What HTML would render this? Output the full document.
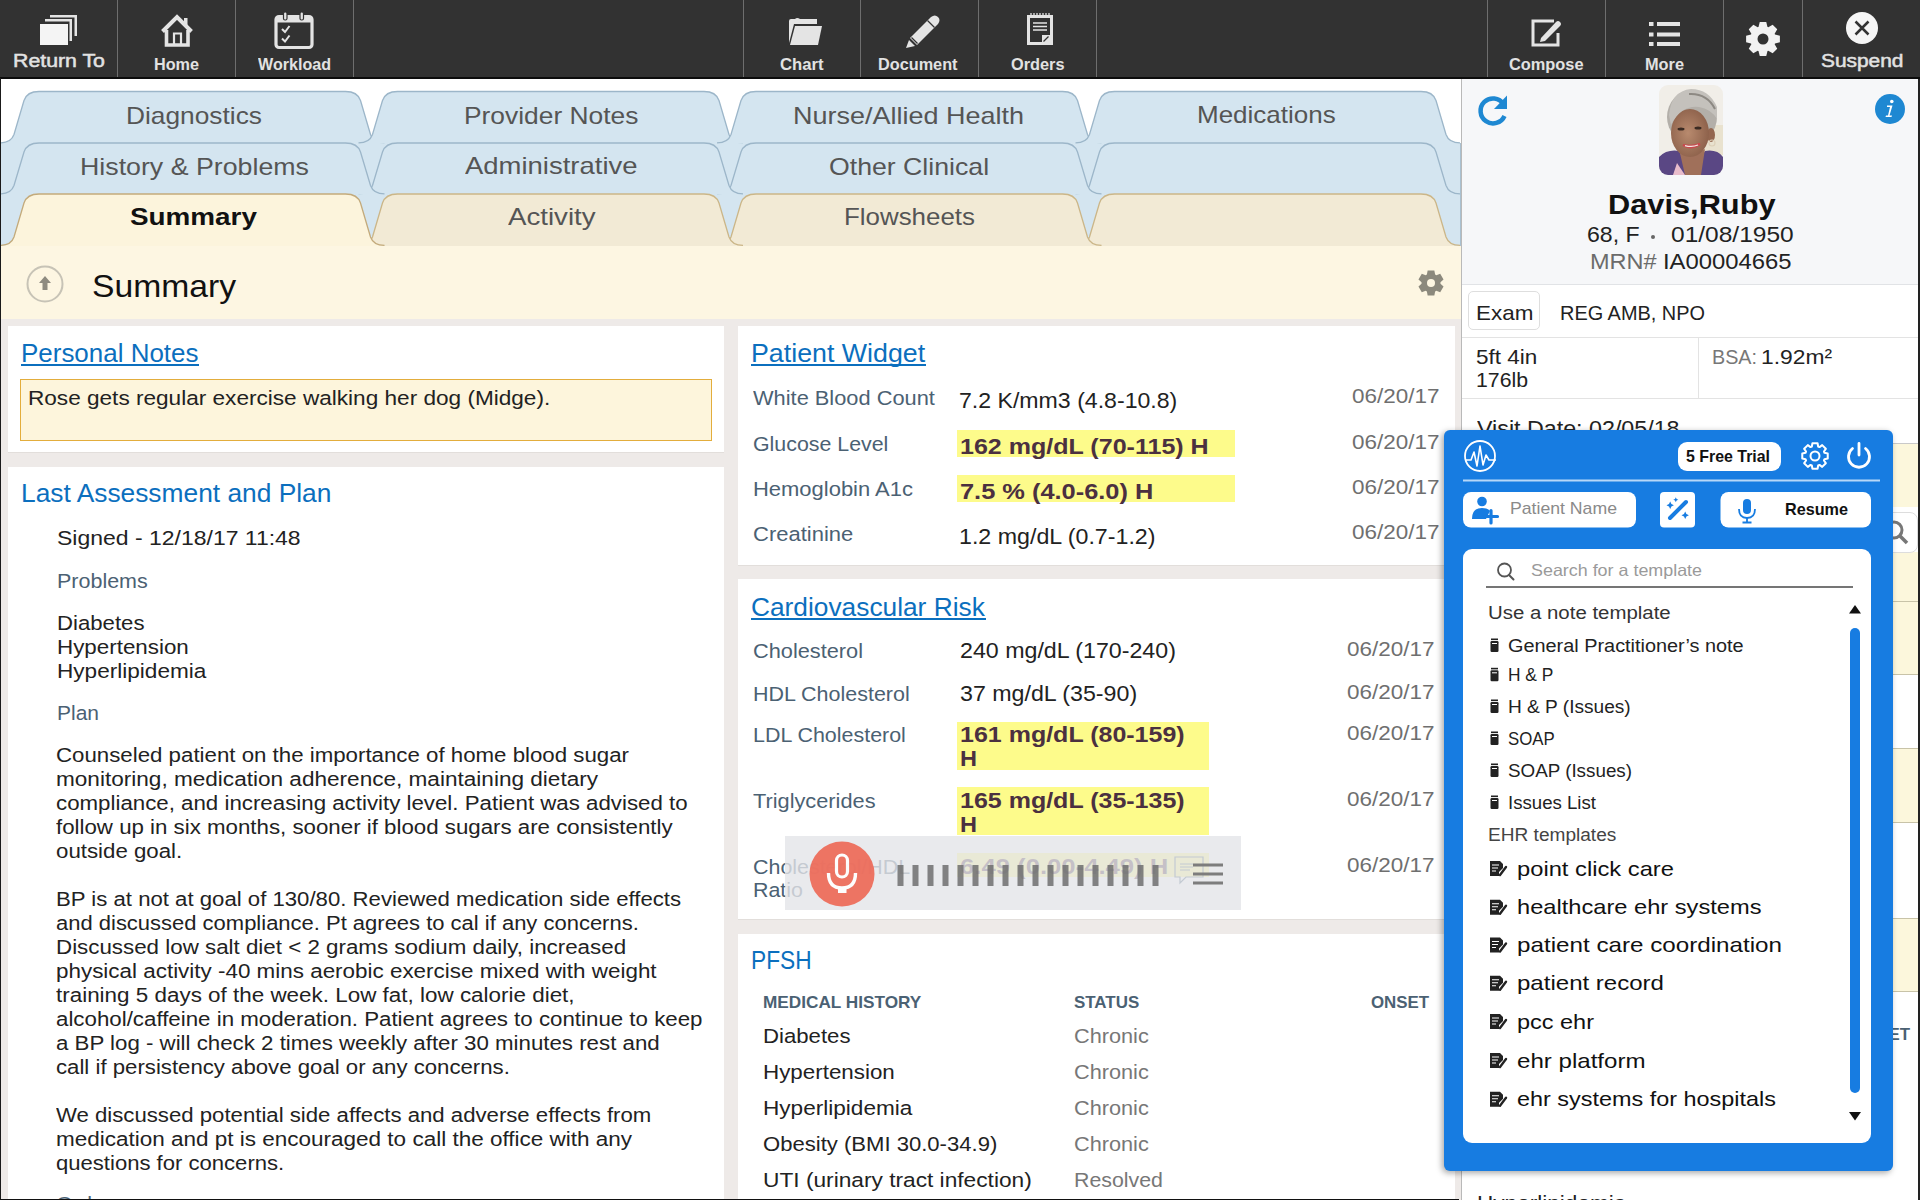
<!DOCTYPE html>
<html><head><meta charset="utf-8"><title>Summary</title><style>
html,body{margin:0;padding:0;width:1920px;height:1200px;overflow:hidden;background:#fff;}
body{position:relative;font-family:"Liberation Sans",sans-serif;}
.t{position:absolute;line-height:0;white-space:pre;transform-origin:0 0;}
</style></head><body>
<div style="position:absolute;left:0;top:0;width:1920px;height:77px;background:#323232"></div>
<div style="position:absolute;left:0;top:77px;width:1920px;height:2px;background:#0c0c0c"></div>
<div style="position:absolute;left:117px;top:0;width:1px;height:77px;background:#6e6e6e"></div>
<div style="position:absolute;left:235px;top:0;width:1px;height:77px;background:#6e6e6e"></div>
<div style="position:absolute;left:353px;top:0;width:1px;height:77px;background:#6e6e6e"></div>
<div style="position:absolute;left:743px;top:0;width:1px;height:77px;background:#6e6e6e"></div>
<div style="position:absolute;left:860px;top:0;width:1px;height:77px;background:#6e6e6e"></div>
<div style="position:absolute;left:978px;top:0;width:1px;height:77px;background:#6e6e6e"></div>
<div style="position:absolute;left:1096px;top:0;width:1px;height:77px;background:#6e6e6e"></div>
<div style="position:absolute;left:1487px;top:0;width:1px;height:77px;background:#6e6e6e"></div>
<div style="position:absolute;left:1605px;top:0;width:1px;height:77px;background:#6e6e6e"></div>
<div style="position:absolute;left:1723px;top:0;width:1px;height:77px;background:#6e6e6e"></div>
<div style="position:absolute;left:1802px;top:0;width:1px;height:77px;background:#6e6e6e"></div>
<div class="t" style="left:13.00px;top:60.70px;font-size:18px;color:#e2e2e2;transform:scaleX(1.1831);-webkit-text-stroke:0.5px #e2e2e2;">Return To</div>
<div class="t" style="left:154.00px;top:64.90px;font-size:16px;color:#e2e2e2;font-weight:bold;transform:scaleX(1.0117);">Home</div>
<div class="t" style="left:258.00px;top:64.90px;font-size:16px;color:#e2e2e2;font-weight:bold;transform:scaleX(1.0050);">Workload</div>
<div class="t" style="left:780.00px;top:64.90px;font-size:16px;color:#e2e2e2;font-weight:bold;transform:scaleX(1.0417);">Chart</div>
<div class="t" style="left:878.00px;top:64.90px;font-size:16px;color:#e2e2e2;font-weight:bold;transform:scaleX(1.0161);">Document</div>
<div class="t" style="left:1011.00px;top:64.90px;font-size:16px;color:#e2e2e2;font-weight:bold;transform:scaleX(1.0194);">Orders</div>
<div class="t" style="left:1509.00px;top:64.90px;font-size:16px;color:#e2e2e2;font-weight:bold;transform:scaleX(1.0222);">Compose</div>
<div class="t" style="left:1645.00px;top:64.90px;font-size:16px;color:#e2e2e2;font-weight:bold;transform:scaleX(1.0199);">More</div>
<div class="t" style="left:1820.50px;top:60.70px;font-size:18px;color:#e2e2e2;transform:scaleX(1.1603);-webkit-text-stroke:0.5px #e2e2e2;">Suspend</div>
<svg style="position:absolute;left:0;top:0" width="1920" height="78" viewBox="0 0 1920 78"><rect x="50" y="15" width="27" height="21" fill="#e4e4e4"/><rect x="47.5" y="17.5" width="27" height="21" fill="#323232"/><rect x="45" y="19" width="27" height="22" fill="#e4e4e4"/><rect x="42.5" y="21.5" width="27" height="22" fill="#323232"/><rect x="40" y="24" width="28" height="21" fill="#f4f4f4"/><path d="M162.5 31.5 L177 17 L191.5 31.5" fill="none" stroke="#e4e4e4" stroke-width="4" stroke-linejoin="miter"/><path d="M166.5 30 V45 H188 V30" fill="none" stroke="#e4e4e4" stroke-width="3.6"/><path d="M174 45 V33.5 H181 V45" fill="none" stroke="#e4e4e4" stroke-width="2.2"/><rect x="184" y="18" width="3.5" height="8" fill="#e4e4e4"/><rect x="276" y="16.5" width="36" height="31" rx="3" fill="none" stroke="#e4e4e4" stroke-width="3.2"/><rect x="276" y="16.5" width="36" height="6" fill="#e4e4e4"/><rect x="283.5" y="12" width="3.5" height="8" rx="1.5" fill="#e4e4e4" stroke="#323232" stroke-width="1.2"/><rect x="300" y="12" width="3.5" height="8" rx="1.5" fill="#e4e4e4" stroke="#323232" stroke-width="1.2"/><path d="M282 29 L285 32 L289.5 26 M282 38.5 L285 41.5 L289.5 35.5" fill="none" stroke="#e4e4e4" stroke-width="2"/><path d="M789 45 V21 Q789 19 791 19 H795 Q797 17 800 19 H817 V24 H794 L789 43 Z" fill="#e4e4e4"/><path d="M790 45 L795 26 H822 L818 45 Z" fill="#e4e4e4"/><path d="M910 38 L931 17 Q935 14 938 17 Q941 20 938 24 L917 45 Z" fill="#e4e4e4"/><path d="M909 40 L915 46 L906 48 Z" fill="#e4e4e4"/><path d="M927.5 20.5 L934.5 27.5" stroke="#323232" stroke-width="1.3"/><path d="M911.5 37.5 L917.5 43.5" stroke="#323232" stroke-width="1.2"/><rect x="1028.5" y="16.5" width="23" height="27" fill="none" stroke="#e4e4e4" stroke-width="3"/><path d="M1031 13 V18 M1034 13 V18 M1037 13 V18 M1040 13 V18 M1043 13 V18 M1046 13 V18 M1049 13 V18" stroke="#e4e4e4" stroke-width="1.3"/><path d="M1033 23 H1047 M1033 26.5 H1047 M1033 30 H1047" stroke="#e4e4e4" stroke-width="1.5"/><rect x="1042" y="35" width="8" height="8" fill="#e4e4e4"/><path d="M1043.5 41.5 L1048.5 36.5" stroke="#323232" stroke-width="1.3"/><path d="M1554 21 H1533 V45 H1558 V33" fill="none" stroke="#e4e4e4" stroke-width="3"/><path d="M1541 38 L1556 22 Q1558 20 1560 22 Q1562 24 1560 26 L1545 41 L1540 42 Z" fill="#e4e4e4"/><rect x="1649" y="22" width="4.5" height="4" fill="#e4e4e4"/><rect x="1657" y="22" width="23" height="4" fill="#e4e4e4"/><rect x="1649" y="32.5" width="4.5" height="4" fill="#e4e4e4"/><rect x="1657" y="32.5" width="23" height="4" fill="#e4e4e4"/><rect x="1649" y="42" width="4.5" height="4" fill="#e4e4e4"/><rect x="1657" y="42" width="23" height="4" fill="#e4e4e4"/><path d="M1779.89 35.75 L1779.89 42.25 L1774.98 43.51 L1774.66 44.28 L1777.24 48.65 L1772.65 53.24 L1768.28 50.66 L1767.51 50.98 L1766.25 55.89 L1759.75 55.89 L1758.49 50.98 L1757.72 50.66 L1753.35 53.24 L1748.76 48.65 L1751.34 44.28 L1751.02 43.51 L1746.11 42.25 L1746.11 35.75 L1751.02 34.49 L1751.34 33.72 L1748.76 29.35 L1753.35 24.76 L1757.72 27.34 L1758.49 27.02 L1759.75 22.11 L1766.25 22.11 L1767.51 27.02 L1768.28 27.34 L1772.65 24.76 L1777.24 29.35 L1774.66 33.72 L1774.98 34.49 Z" fill="#f2f2f2"/><circle cx="1763" cy="39" r="5.5" fill="#323232"/><circle cx="1862" cy="28" r="16" fill="#f6f6f6"/><path d="M1855.5 21.5 L1868.5 34.5 M1868.5 21.5 L1855.5 34.5" stroke="#333" stroke-width="2.5"/></svg>
<div style="position:absolute;left:1px;top:79px;width:1460px;height:168px;background:#fff"></div>
<div style="position:absolute;left:1px;top:143px;width:1459px;height:104px;background:#d4e5f0;border-right:1px solid #a9c0d0"></div>
<svg style="position:absolute;left:0;top:0" width="1461" height="260" viewBox="0 0 1461 260"><defs><clipPath id="tc"><rect x="1" y="79" width="1459" height="168"/></clipPath></defs><g clip-path="url(#tc)"><path d="M0.0 143.5 Q11.0 143.5 14.0 134.5 L24.0 100.5 Q27.0 91.5 39.0 91.5 L345.5 91.5 Q357.5 91.5 360.5 100.5 L370.5 134.5 Q373.5 143.5 384.5 143.5 Z" fill="#d4e5f0"/><path d="M0.0 142.9 Q11.0 142.9 14.0 134.5 L24.0 100.5 Q27.0 91.5 39.0 91.5 L345.5 91.5 Q357.5 91.5 360.5 100.5 L370.5 134.5 Q373.5 142.9 384.5 142.9" fill="none" stroke="#9cb6c9" stroke-width="1.3"/><path d="M358.5 143.5 Q369.5 143.5 372.5 134.5 L382.5 100.5 Q385.5 91.5 397.5 91.5 L704.0 91.5 Q716.0 91.5 719.0 100.5 L729.0 134.5 Q732.0 143.5 743.0 143.5 Z" fill="#d4e5f0"/><path d="M358.5 142.9 Q369.5 142.9 372.5 134.5 L382.5 100.5 Q385.5 91.5 397.5 91.5 L704.0 91.5 Q716.0 91.5 719.0 100.5 L729.0 134.5 Q732.0 142.9 743.0 142.9" fill="none" stroke="#9cb6c9" stroke-width="1.3"/><path d="M717.0 143.5 Q728.0 143.5 731.0 134.5 L741.0 100.5 Q744.0 91.5 756.0 91.5 L1062.5 91.5 Q1074.5 91.5 1077.5 100.5 L1087.5 134.5 Q1090.5 143.5 1101.5 143.5 Z" fill="#d4e5f0"/><path d="M717.0 142.9 Q728.0 142.9 731.0 134.5 L741.0 100.5 Q744.0 91.5 756.0 91.5 L1062.5 91.5 Q1074.5 91.5 1077.5 100.5 L1087.5 134.5 Q1090.5 142.9 1101.5 142.9" fill="none" stroke="#9cb6c9" stroke-width="1.3"/><path d="M1075.5 143.5 Q1086.5 143.5 1089.5 134.5 L1099.5 100.5 Q1102.5 91.5 1114.5 91.5 L1421.0 91.5 Q1433.0 91.5 1436.0 100.5 L1446.0 134.5 Q1449.0 143.5 1460.0 143.5 Z" fill="#d4e5f0"/><path d="M1075.5 142.9 Q1086.5 142.9 1089.5 134.5 L1099.5 100.5 Q1102.5 91.5 1114.5 91.5 L1421.0 91.5 Q1433.0 91.5 1436.0 100.5 L1446.0 134.5 Q1449.0 142.9 1460.0 142.9" fill="none" stroke="#9cb6c9" stroke-width="1.3"/><path d="M1075.5 194.5 Q1086.5 194.5 1089.5 185.5 L1099.5 152 Q1102.5 143 1114.5 143 L1421.0 143 Q1433.0 143 1436.0 152 L1446.0 185.5 Q1449.0 194.5 1460.0 194.5 Z" fill="#d4e5f0"/><path d="M1075.5 193.9 Q1086.5 193.9 1089.5 185.5 L1099.5 152 Q1102.5 143 1114.5 143 L1421.0 143 Q1433.0 143 1436.0 152 L1446.0 185.5 Q1449.0 193.9 1460.0 193.9" fill="none" stroke="#9cb6c9" stroke-width="1.3"/><path d="M717.0 194.5 Q728.0 194.5 731.0 185.5 L741.0 152 Q744.0 143 756.0 143 L1062.5 143 Q1074.5 143 1077.5 152 L1087.5 185.5 Q1090.5 194.5 1101.5 194.5 Z" fill="#d4e5f0"/><path d="M717.0 193.9 Q728.0 193.9 731.0 185.5 L741.0 152 Q744.0 143 756.0 143 L1062.5 143 Q1074.5 143 1077.5 152 L1087.5 185.5 Q1090.5 193.9 1101.5 193.9" fill="none" stroke="#9cb6c9" stroke-width="1.3"/><path d="M358.5 194.5 Q369.5 194.5 372.5 185.5 L382.5 152 Q385.5 143 397.5 143 L704.0 143 Q716.0 143 719.0 152 L729.0 185.5 Q732.0 194.5 743.0 194.5 Z" fill="#d4e5f0"/><path d="M358.5 193.9 Q369.5 193.9 372.5 185.5 L382.5 152 Q385.5 143 397.5 143 L704.0 143 Q716.0 143 719.0 152 L729.0 185.5 Q732.0 193.9 743.0 193.9" fill="none" stroke="#9cb6c9" stroke-width="1.3"/><path d="M0.0 194.5 Q11.0 194.5 14.0 185.5 L24.0 152 Q27.0 143 39.0 143 L345.5 143 Q357.5 143 360.5 152 L370.5 185.5 Q373.5 194.5 384.5 194.5 Z" fill="#d4e5f0"/><path d="M0.0 193.9 Q11.0 193.9 14.0 185.5 L24.0 152 Q27.0 143 39.0 143 L345.5 143 Q357.5 143 360.5 152 L370.5 185.5 Q373.5 193.9 384.5 193.9" fill="none" stroke="#9cb6c9" stroke-width="1.3"/><path d="M1075.5 246 Q1086.5 246 1089.5 237 L1099.5 203 Q1102.5 194 1114.5 194 L1421.0 194 Q1433.0 194 1436.0 203 L1446.0 237 Q1449.0 246 1460.0 246 Z" fill="#f2ead5"/><path d="M1075.5 245.4 Q1086.5 245.4 1089.5 237 L1099.5 203 Q1102.5 194 1114.5 194 L1421.0 194 Q1433.0 194 1436.0 203 L1446.0 237 Q1449.0 245.4 1460.0 245.4" fill="none" stroke="#cbb688" stroke-width="1.3"/><path d="M717.0 246 Q728.0 246 731.0 237 L741.0 203 Q744.0 194 756.0 194 L1062.5 194 Q1074.5 194 1077.5 203 L1087.5 237 Q1090.5 246 1101.5 246 Z" fill="#f2ead5"/><path d="M717.0 245.4 Q728.0 245.4 731.0 237 L741.0 203 Q744.0 194 756.0 194 L1062.5 194 Q1074.5 194 1077.5 203 L1087.5 237 Q1090.5 245.4 1101.5 245.4" fill="none" stroke="#cbb688" stroke-width="1.3"/><path d="M358.5 246 Q369.5 246 372.5 237 L382.5 203 Q385.5 194 397.5 194 L704.0 194 Q716.0 194 719.0 203 L729.0 237 Q732.0 246 743.0 246 Z" fill="#f2ead5"/><path d="M358.5 245.4 Q369.5 245.4 372.5 237 L382.5 203 Q385.5 194 397.5 194 L704.0 194 Q716.0 194 719.0 203 L729.0 237 Q732.0 245.4 743.0 245.4" fill="none" stroke="#cbb688" stroke-width="1.3"/><path d="M0 246 Q11 246 14 237 L24 203 Q27 194 39 194 L345.5 194 Q357.5 194 360.5 203 L370.5 237 Q373.5 246 384.5 246 Z" fill="#fcf4dc"/><path d="M0 245.4 Q11 245.4 14 237 L24 203 Q27 194 39 194 L345.5 194 Q357.5 194 360.5 203 L370.5 237 Q373.5 245.4 384.5 245.4" fill="none" stroke="#c3aa7b" stroke-width="1.3"/></g></svg>
<div class="t" style="left:126.00px;top:115.60px;font-size:24px;color:#555555;transform:scaleX(1.0961);">Diagnostics</div>
<div class="t" style="left:464.40px;top:115.60px;font-size:24px;color:#555555;transform:scaleX(1.0985);">Provider Notes</div>
<div class="t" style="left:793.00px;top:115.60px;font-size:24px;color:#555555;transform:scaleX(1.1244);">Nurse/Allied Health</div>
<div class="t" style="left:1197.30px;top:115.30px;font-size:24px;color:#555555;transform:scaleX(1.0833);">Medications</div>
<div class="t" style="left:79.50px;top:166.60px;font-size:24px;color:#555555;transform:scaleX(1.1147);">History &amp; Problems</div>
<div class="t" style="left:465.00px;top:166.40px;font-size:24px;color:#555555;transform:scaleX(1.1445);">Administrative</div>
<div class="t" style="left:828.50px;top:166.60px;font-size:24px;color:#555555;transform:scaleX(1.1111);">Other Clinical</div>
<div class="t" style="left:130.00px;top:217.10px;font-size:24px;color:#111;font-weight:bold;transform:scaleX(1.1605);">Summary</div>
<div class="t" style="left:507.50px;top:217.20px;font-size:24px;color:#555555;transform:scaleX(1.1519);">Activity</div>
<div class="t" style="left:843.50px;top:217.10px;font-size:24px;color:#555555;transform:scaleX(1.0787);">Flowsheets</div>
<div style="position:absolute;left:1px;top:246px;width:1460px;height:73px;background:#fdf6e2"></div>
<div style="position:absolute;left:1px;top:319px;width:1460px;height:881px;background:#eeeae8"></div>
<svg style="position:absolute;left:0;top:240" width="100" height="90"></svg>
<svg style="position:absolute;left:20px;top:259px" width="50" height="50" viewBox="20 259 50 50"><circle cx="45" cy="284" r="17.5" fill="none" stroke="#c7c3b6" stroke-width="2"/><path d="M45 276 L51 283 H47.5 V290 H42.5 V283 H39 Z" fill="#8e8b80"/></svg>
<div class="t" style="left:91.70px;top:286.55px;font-size:31.29px;color:#111;transform:scaleX(1.0759);">Summary</div>
<svg style="position:absolute;left:1410px;top:262px" width="42" height="42" viewBox="1410 262 42 42"><path d="M1427.66 270.44 L1434.34 270.44 L1435.13 274.45 L1436.34 275.14 L1440.21 273.82 L1443.55 279.61 L1440.47 282.30 L1440.47 283.70 L1443.55 286.39 L1440.21 292.18 L1436.34 290.86 L1435.13 291.55 L1434.34 295.56 L1427.66 295.56 L1426.87 291.55 L1425.66 290.86 L1421.79 292.18 L1418.45 286.39 L1421.53 283.70 L1421.53 282.30 L1418.45 279.61 L1421.79 273.82 L1425.66 275.14 L1426.87 274.45 Z" fill="#8c897d"/><circle cx="1431" cy="283" r="4" fill="#fdf6e2"/></svg>
<div style="position:absolute;left:8px;top:326px;width:716px;height:126px;background:#fff;border-bottom:1px solid #e2dedb"></div>
<div class="t" style="left:21.00px;top:353.25px;font-size:24.99px;color:#0b6fbe;transform:scaleX(1.0388);">Personal Notes</div>
<div style="position:absolute;left:21px;top:364px;width:178px;height:2px;background:#0b6fbe"></div>
<div style="position:absolute;left:20px;top:379px;width:690px;height:60px;background:#fdf5dc;border:1px solid #e3ad3c"></div>
<div class="t" style="left:28.00px;top:398.31px;font-size:21.11px;color:#222222;transform:scaleX(1.0699);">Rose gets regular exercise walking her dog (Midge).</div>
<div style="position:absolute;left:8px;top:467px;width:716px;height:760px;background:#fff;border-bottom:1px solid #e2dedb"></div>
<div class="t" style="left:21.00px;top:493.25px;font-size:24.99px;color:#0b6fbe;transform:scaleX(1.0542);">Last Assessment and Plan</div>
<div class="t" style="left:57.00px;top:537.61px;font-size:21.11px;color:#222222;transform:scaleX(1.0887);">Signed - 12/18/17 11:48</div>
<div class="t" style="left:57.00px;top:581.46px;font-size:20.68px;color:#4b6173;transform:scaleX(1.0394);">Problems</div>
<div class="t" style="left:57.00px;top:622.76px;font-size:20.68px;color:#222222;transform:scaleX(1.0721);">Diabetes</div>
<div class="t" style="left:57.00px;top:646.76px;font-size:20.68px;color:#222222;transform:scaleX(1.0820);">Hypertension</div>
<div class="t" style="left:57.00px;top:670.76px;font-size:20.68px;color:#222222;transform:scaleX(1.0922);">Hyperlipidemia</div>
<div class="t" style="left:57.00px;top:712.76px;font-size:20.68px;color:#4b6173;transform:scaleX(1.0145);">Plan</div>
<div class="t" style="left:56.00px;top:754.81px;font-size:20.53px;color:#222222;transform:scaleX(1.0851);">Counseled patient on the importance of home blood sugar</div>
<div class="t" style="left:56.00px;top:778.81px;font-size:20.53px;color:#222222;transform:scaleX(1.1002);">monitoring, medication adherence, maintaining dietary</div>
<div class="t" style="left:56.00px;top:802.81px;font-size:20.53px;color:#222222;transform:scaleX(1.0861);">compliance, and increasing activity level. Patient was advised to</div>
<div class="t" style="left:56.00px;top:826.81px;font-size:20.53px;color:#222222;transform:scaleX(1.0857);">follow up in six months, sooner if blood sugars are consistently</div>
<div class="t" style="left:56.00px;top:850.81px;font-size:20.53px;color:#222222;transform:scaleX(1.0849);">outside goal.</div>
<div class="t" style="left:56.00px;top:898.81px;font-size:20.53px;color:#222222;transform:scaleX(1.0804);">BP is at not at goal of 130/80. Reviewed medication side effects</div>
<div class="t" style="left:56.00px;top:922.81px;font-size:20.53px;color:#222222;transform:scaleX(1.0713);">and discussed compliance. Pt agrees to cal if any concerns.</div>
<div class="t" style="left:56.00px;top:946.81px;font-size:20.53px;color:#222222;transform:scaleX(1.0888);">Discussed low salt diet &lt; 2 grams sodium daily, increased</div>
<div class="t" style="left:56.00px;top:970.81px;font-size:20.53px;color:#222222;transform:scaleX(1.0928);">physical activity -40 mins aerobic exercise mixed with weight</div>
<div class="t" style="left:56.00px;top:994.81px;font-size:20.53px;color:#222222;transform:scaleX(1.0931);">training 5 days of the week. Low fat, low calorie diet,</div>
<div class="t" style="left:56.00px;top:1018.81px;font-size:20.53px;color:#222222;transform:scaleX(1.0866);">alcohol/caffeine in moderation. Patient agrees to continue to keep</div>
<div class="t" style="left:56.00px;top:1042.81px;font-size:20.53px;color:#222222;transform:scaleX(1.0856);">a BP log - will check 2 times weekly after 30 minutes rest and</div>
<div class="t" style="left:56.00px;top:1066.81px;font-size:20.53px;color:#222222;transform:scaleX(1.0815);">call if persistency above goal or any concerns.</div>
<div class="t" style="left:56.00px;top:1114.81px;font-size:20.53px;color:#222222;transform:scaleX(1.0807);">We discussed potential side affects and adverse effects from</div>
<div class="t" style="left:56.00px;top:1138.81px;font-size:20.53px;color:#222222;transform:scaleX(1.0964);">medication and pt is encouraged to call the office with any</div>
<div class="t" style="left:56.00px;top:1162.81px;font-size:20.53px;color:#222222;transform:scaleX(1.0757);">questions for concerns.</div>
<div class="t" style="left:56.00px;top:1203.76px;font-size:20.68px;color:#4b6173;transform:scaleX(1.0493);">Orders</div>
<div style="position:absolute;left:738px;top:326px;width:717px;height:239px;background:#fff;border-bottom:1px solid #e2dedb"></div>
<div class="t" style="left:751.00px;top:353.25px;font-size:24.99px;color:#0b6fbe;transform:scaleX(1.0717);">Patient Widget</div>
<div style="position:absolute;left:751px;top:364px;width:175px;height:2px;background:#0b6fbe"></div>
<div class="t" style="left:753.00px;top:397.83px;font-size:20.48px;color:#4b6173;transform:scaleX(1.0657);">White Blood Count</div>
<div class="t" style="left:959.30px;top:400.54px;font-size:21.32px;color:#222222;transform:scaleX(1.0841);">7.2 K/mm3 (4.8-10.8)</div>
<div class="t" style="left:1352.44px;top:396.33px;font-size:20.48px;color:#6f6f6f;transform:scaleX(1.0976);">06/20/17</div>
<div class="t" style="left:753.00px;top:443.83px;font-size:20.48px;color:#4b6173;transform:scaleX(1.0431);">Glucose Level</div>
<div style="position:absolute;left:957px;top:430px;width:278px;height:27px;background:#fdfb8b"></div>
<div class="t" style="left:960.00px;top:446.54px;font-size:21.32px;color:#4b3040;font-weight:bold;transform:scaleX(1.1751);">162 mg/dL (70-115) H</div>
<div class="t" style="left:1352.44px;top:442.33px;font-size:20.48px;color:#6f6f6f;transform:scaleX(1.0976);">06/20/17</div>
<div class="t" style="left:753.00px;top:488.83px;font-size:20.48px;color:#4b6173;transform:scaleX(1.0730);">Hemoglobin A1c</div>
<div style="position:absolute;left:957px;top:475px;width:278px;height:27px;background:#fdfb8b"></div>
<div class="t" style="left:960.00px;top:491.54px;font-size:21.32px;color:#4b3040;font-weight:bold;transform:scaleX(1.1910);">7.5 % (4.0-6.0) H</div>
<div class="t" style="left:1352.44px;top:487.33px;font-size:20.48px;color:#6f6f6f;transform:scaleX(1.0976);">06/20/17</div>
<div class="t" style="left:753.00px;top:533.83px;font-size:20.48px;color:#4b6173;transform:scaleX(1.0743);">Creatinine</div>
<div class="t" style="left:959.30px;top:536.54px;font-size:21.32px;color:#222222;transform:scaleX(1.0887);">1.2 mg/dL (0.7-1.2)</div>
<div class="t" style="left:1352.44px;top:532.33px;font-size:20.48px;color:#6f6f6f;transform:scaleX(1.0976);">06/20/17</div>
<div style="position:absolute;left:738px;top:579px;width:717px;height:340px;background:#fff;border-bottom:1px solid #e2dedb"></div>
<div class="t" style="left:751.00px;top:606.75px;font-size:24.99px;color:#0b6fbe;transform:scaleX(1.0525);">Cardiovascular Risk</div>
<div style="position:absolute;left:751px;top:618px;width:235px;height:2px;background:#0b6fbe"></div>
<div class="t" style="left:753.00px;top:651.43px;font-size:20.48px;color:#4b6173;transform:scaleX(1.0622);">Cholesterol</div>
<div class="t" style="left:960.00px;top:651.14px;font-size:21.32px;color:#222222;transform:scaleX(1.0888);">240 mg/dL (170-240)</div>
<div class="t" style="left:1347.44px;top:649.43px;font-size:20.48px;color:#6f6f6f;transform:scaleX(1.0976);">06/20/17</div>
<div class="t" style="left:753.00px;top:693.83px;font-size:20.48px;color:#4b6173;transform:scaleX(1.0487);">HDL Cholesterol</div>
<div class="t" style="left:960.00px;top:693.54px;font-size:21.32px;color:#222222;transform:scaleX(1.0887);">37 mg/dL (35-90)</div>
<div class="t" style="left:1347.44px;top:691.83px;font-size:20.48px;color:#6f6f6f;transform:scaleX(1.0976);">06/20/17</div>
<div class="t" style="left:753.00px;top:735.43px;font-size:20.48px;color:#4b6173;transform:scaleX(1.0469);">LDL Cholesterol</div>
<div style="position:absolute;left:957px;top:721.6px;width:252px;height:48px;background:#fdfb8b"></div>
<div class="t" style="left:960.00px;top:735.14px;font-size:21.32px;color:#4b3040;font-weight:bold;transform:scaleX(1.1731);">161 mg/dL (80-159)</div>
<div class="t" style="left:960.00px;top:759.14px;font-size:21.32px;color:#4b3040;font-weight:bold;transform:scaleX(1.1042);">H</div>
<div class="t" style="left:1347.44px;top:733.43px;font-size:20.48px;color:#6f6f6f;transform:scaleX(1.0976);">06/20/17</div>
<div class="t" style="left:753.00px;top:800.83px;font-size:20.48px;color:#4b6173;transform:scaleX(1.0629);">Triglycerides</div>
<div style="position:absolute;left:957px;top:787px;width:252px;height:48px;background:#fdfb8b"></div>
<div class="t" style="left:960.00px;top:800.54px;font-size:21.32px;color:#4b3040;font-weight:bold;transform:scaleX(1.1731);">165 mg/dL (35-135)</div>
<div class="t" style="left:960.00px;top:824.54px;font-size:21.32px;color:#4b3040;font-weight:bold;transform:scaleX(1.1042);">H</div>
<div class="t" style="left:1347.44px;top:798.83px;font-size:20.48px;color:#6f6f6f;transform:scaleX(1.0976);">06/20/17</div>
<div class="t" style="left:753.00px;top:867.23px;font-size:20.48px;color:#4b6173;transform:scaleX(1.0463);">Cholesterol/HDL</div>
<div style="position:absolute;left:957px;top:853.4px;width:252px;height:24px;background:#fdfb8b"></div>
<div class="t" style="left:960.00px;top:866.94px;font-size:21.32px;color:#4b3040;font-weight:bold;transform:scaleX(1.2044);">6.49 (0.00-4.49) H</div>
<div class="t" style="left:1347.44px;top:865.23px;font-size:20.48px;color:#6f6f6f;transform:scaleX(1.0976);">06/20/17</div>
<div class="t" style="left:753.00px;top:890.33px;font-size:20.48px;color:#4b6173;transform:scaleX(1.0459);">Ratio</div>
<div style="position:absolute;left:738px;top:934px;width:717px;height:300px;background:#fff;border-bottom:1px solid #e2dedb"></div>
<div class="t" style="left:751.00px;top:960.25px;font-size:24.99px;color:#0b6fbe;transform:scaleX(0.9095);">PFSH</div>
<div class="t" style="left:763.00px;top:1002.34px;font-size:16.17px;color:#4b6173;font-weight:bold;transform:scaleX(1.0641);">MEDICAL HISTORY</div>
<div class="t" style="left:1074.00px;top:1002.34px;font-size:16.17px;color:#4b6173;font-weight:bold;transform:scaleX(1.0476);">STATUS</div>
<div class="t" style="left:1370.87px;top:1002.34px;font-size:16.17px;color:#4b6173;font-weight:bold;transform:scaleX(1.0436);">ONSET</div>
<div class="t" style="left:763.00px;top:1036.26px;font-size:20.68px;color:#222222;transform:scaleX(1.0721);">Diabetes</div>
<div class="t" style="left:1074.00px;top:1036.26px;font-size:20.68px;color:#777777;transform:scaleX(1.0494);">Chronic</div>
<div class="t" style="left:763.00px;top:1072.26px;font-size:20.68px;color:#222222;transform:scaleX(1.0820);">Hypertension</div>
<div class="t" style="left:1074.00px;top:1072.26px;font-size:20.68px;color:#777777;transform:scaleX(1.0494);">Chronic</div>
<div class="t" style="left:763.00px;top:1108.26px;font-size:20.68px;color:#222222;transform:scaleX(1.0922);">Hyperlipidemia</div>
<div class="t" style="left:1074.00px;top:1108.26px;font-size:20.68px;color:#777777;transform:scaleX(1.0494);">Chronic</div>
<div class="t" style="left:763.00px;top:1144.26px;font-size:20.68px;color:#222222;transform:scaleX(1.0675);">Obesity (BMI 30.0-34.9)</div>
<div class="t" style="left:1074.00px;top:1144.26px;font-size:20.68px;color:#777777;transform:scaleX(1.0494);">Chronic</div>
<div class="t" style="left:763.00px;top:1180.26px;font-size:20.68px;color:#222222;transform:scaleX(1.0983);">UTI (urinary tract infection)</div>
<div class="t" style="left:1074.00px;top:1180.26px;font-size:20.68px;color:#777777;transform:scaleX(1.0326);">Resolved</div>
<div style="position:absolute;left:1461px;top:79px;width:459px;height:1121px;background:#fff"></div>
<div style="position:absolute;left:1461px;top:79px;width:1px;height:1121px;background:#b9b9b9"></div>
<div style="position:absolute;left:1918px;top:79px;width:2px;height:1121px;background:#222"></div>
<div style="position:absolute;left:1462px;top:79px;width:456px;height:205px;background:#f6f7f9;border-bottom:1px solid #e1e3e6"></div>
<svg style="position:absolute;left:1470px;top:88px" width="45" height="45" viewBox="1470 88 45 45"><path d="M1503.5 104 A12.5 12.5 0 1 0 1504.5 116" fill="none" stroke="#1e88d2" stroke-width="4.5"/><path d="M1507 95.5 V109 H1494 Z" fill="#1e88d2"/></svg>
<svg style="position:absolute;left:1870px;top:89px" width="40" height="40" viewBox="1870 89 40 40"><circle cx="1890" cy="109" r="15" fill="#1e88d2"/><circle cx="1891.8" cy="101.5" r="1.8" fill="#fff"/><path d="M1887 105.5 H1892.5 L1889.5 115.5 H1892 L1891.5 117 H1885.5 L1886 115.5 H1888 L1890 107 H1887 Z" fill="#fff"/></svg>
<svg style="position:absolute;left:1659px;top:85px" width="64" height="90" viewBox="0 0 64 90"><defs><clipPath id="ph"><rect x="0" y="0" width="64" height="90" rx="9"/></clipPath><radialGradient id="fc" cx="0.45" cy="0.5" r="0.6"><stop offset="0" stop-color="#b88a6e"/><stop offset="1" stop-color="#8a5e48"/></radialGradient></defs><g clip-path="url(#ph)"><rect width="64" height="90" fill="#f1eee8"/><rect x="44" y="40" width="20" height="30" fill="#e9e2cf"/><path d="M0 72 Q8 64 20 66 L32 88 L46 66 Q58 64 64 72 V90 H0 Z" fill="#5a4784"/><path d="M20 64 Q32 72 46 64 L42 90 H26 Z" fill="#a0705a"/><path d="M18 78 L26 90 H14 Z" fill="#e8bccb"/><ellipse cx="33" cy="32" rx="25" ry="27" fill="#b3afa9"/><ellipse cx="52" cy="50" rx="4" ry="7" fill="#94664f"/><ellipse cx="31" cy="48" rx="19" ry="24" fill="url(#fc)"/><path d="M12 40 Q22 20 40 22 Q52 24 58 34 L58 22 Q50 4 32 4 Q12 6 10 30 Z" fill="#c4c1bc"/><path d="M30 9 Q48 8 56 24" fill="none" stroke="#8d8983" stroke-width="2"/><ellipse cx="22" cy="44" rx="3.5" ry="1.5" fill="#3a2a22"/><ellipse cx="39" cy="43" rx="3.5" ry="1.5" fill="#3a2a22"/><path d="M24 60 Q32 65 41 59 Q33 62 24 60 Z" fill="#c94a50" stroke="#c94a50" stroke-width="2.2"/><path d="M26 60.5 Q33 62.5 39 60" stroke="#f4ebe6" stroke-width="1.3" fill="none"/><circle cx="53" cy="58" r="3" fill="none" stroke="#ddd0b8" stroke-width="1.2"/></g></svg>
<div class="t" style="left:1607.50px;top:205.26px;font-size:27.83px;color:#111;font-weight:bold;transform:scaleX(1.1054);">Davis,Ruby</div>
<div class="t" style="left:1587.00px;top:234.71px;font-size:22.26px;color:#222;transform:scaleX(1.0380);">68, F</div>
<div style="position:absolute;left:1651px;top:235px;width:4px;height:4px;border-radius:2px;background:#666"></div>
<div class="t" style="left:1671.00px;top:234.71px;font-size:22.26px;color:#222;transform:scaleX(1.1018);">01/08/1950</div>
<div class="t" style="left:1590.00px;top:262.21px;font-size:22.26px;color:#6b6b6b;transform:scaleX(1.0565);">MRN#</div>
<div class="t" style="left:1663.00px;top:262.21px;font-size:22.26px;color:#222;transform:scaleX(1.0715);">IA00004665</div>
<div style="position:absolute;left:1468px;top:291px;width:70px;height:37px;border:1px solid #dedede;border-radius:5px;background:#fff"></div>
<div class="t" style="left:1476.00px;top:312.65px;font-size:21.0px;color:#222;transform:scaleX(1.0679);">Exam</div>
<div class="t" style="left:1560.00px;top:312.65px;font-size:21.0px;color:#222;transform:scaleX(0.9485);">REG AMB, NPO</div>
<div style="position:absolute;left:1462px;top:337px;width:456px;height:1px;background:#e3e3e3"></div>
<div class="t" style="left:1476.00px;top:356.65px;font-size:21.0px;color:#222;transform:scaleX(1.0712);">5ft 4in</div>
<div class="t" style="left:1476.00px;top:379.65px;font-size:21.0px;color:#222;transform:scaleX(1.0128);">176lb</div>
<div style="position:absolute;left:1698px;top:338px;width:1px;height:60px;background:#e3e3e3"></div>
<div class="t" style="left:1712.00px;top:356.65px;font-size:21.0px;color:#777;transform:scaleX(0.9398);">BSA:</div>
<div class="t" style="left:1761.00px;top:356.65px;font-size:21.0px;color:#222;transform:scaleX(1.0871);">1.92m²</div>
<div style="position:absolute;left:1462px;top:398px;width:456px;height:1px;background:#e3e3e3"></div>
<div class="t" style="left:1477.00px;top:428.96px;font-size:21.53px;color:#222;transform:scaleX(1.0809);">Visit Date: 02/05/18</div>
<div style="position:absolute;left:1462px;top:443px;width:456px;height:1px;background:#c9c9c9"></div>
<div style="position:absolute;left:1462px;top:444px;width:456px;height:63px;background:#fcf7dc"></div>
<div style="position:absolute;left:1462px;top:552px;width:456px;height:49px;background:#fcf7dc"></div>
<div style="position:absolute;left:1462px;top:601.5px;width:456px;height:72.5px;background:#fcf7dc"></div>
<div style="position:absolute;left:1462px;top:748px;width:456px;height:74px;background:#fcf7dc"></div>
<div style="position:absolute;left:1462px;top:918px;width:456px;height:73px;background:#fcf7dc"></div>
<div style="position:absolute;left:1462px;top:601px;width:456px;height:1px;background:#c8c3a8"></div>
<div style="position:absolute;left:1462px;top:674px;width:456px;height:1px;background:#c8c3a8"></div>
<div style="position:absolute;left:1462px;top:748px;width:456px;height:1px;background:#c8c3a8"></div>
<div style="position:absolute;left:1462px;top:822px;width:456px;height:1px;background:#c8c3a8"></div>
<div style="position:absolute;left:1462px;top:918px;width:456px;height:1px;background:#c8c3a8"></div>
<div style="position:absolute;left:1462px;top:991px;width:456px;height:1px;background:#c8c3a8"></div>
<div style="position:absolute;left:1600px;top:512px;width:316px;height:39px;border:1px solid #ddd;border-radius:8px;background:#fff"></div>
<svg style="position:absolute;left:1880px;top:515px" width="36" height="36" viewBox="0 0 36 36"><circle cx="14" cy="15" r="8" fill="none" stroke="#777" stroke-width="3"/><path d="M20 21 L27 28" stroke="#777" stroke-width="3.5"/></svg>
<div class="t" style="left:1851.87px;top:1034.34px;font-size:16.17px;color:#4b6173;font-weight:bold;transform:scaleX(1.0436);">ONSET</div>
<div class="t" style="left:1477.00px;top:1202.76px;font-size:20.68px;color:#222;transform:scaleX(1.0922);">Hyperlipidemia</div>
<div style="position:absolute;left:0;top:78px;width:1px;height:1122px;background:#1a1a1a"></div><div style="position:absolute;left:0;top:1199px;width:1459px;height:1px;background:#111"></div>
<div style="position:absolute;left:1444.3px;top:430px;width:448.5px;height:741px;background:#177ce1;border-radius:6px;box-shadow:-2px 2px 6px rgba(0,0,0,0.35)"></div>
<svg style="position:absolute;left:1440px;top:425px" width="460" height="750" viewBox="1440 425 460 750"><circle cx="1480" cy="456" r="15" fill="none" stroke="#fff" stroke-width="1.8"/><path d="M1465 460 H1471 L1474 452 L1477 466 L1480 446 L1483 465 L1486 455 L1489 460 H1496" fill="none" stroke="#fff" stroke-width="1.6" stroke-linejoin="round"/><rect x="1678" y="442" width="103" height="29" rx="9" fill="#fff"/><path d="M1827.74 453.42 L1827.74 458.58 L1824.49 459.15 L1823.94 460.49 L1825.84 463.18 L1822.18 466.84 L1819.49 464.94 L1818.15 465.49 L1817.58 468.74 L1812.42 468.74 L1811.85 465.49 L1810.51 464.94 L1807.82 466.84 L1804.16 463.18 L1806.06 460.49 L1805.51 459.15 L1802.26 458.58 L1802.26 453.42 L1805.51 452.85 L1806.06 451.51 L1804.16 448.82 L1807.82 445.16 L1810.51 447.06 L1811.85 446.51 L1812.42 443.26 L1817.58 443.26 L1818.15 446.51 L1819.49 447.06 L1822.18 445.16 L1825.84 448.82 L1823.94 451.51 L1824.49 452.85 Z" fill="none" stroke="#fff" stroke-width="2" stroke-linejoin="round"/><circle cx="1815" cy="456" r="4.5" fill="none" stroke="#fff" stroke-width="2"/><path d="M1852.5 448.5 A10.5 10.5 0 1 0 1865.5 448.5" fill="none" stroke="#fff" stroke-width="2.8" stroke-linecap="round"/><path d="M1859 443.5 V455" stroke="#fff" stroke-width="2.8" stroke-linecap="round"/><rect x="1463" y="479.5" width="417" height="2" fill="#b7d7f8"/><rect x="1463" y="492" width="173" height="35.5" rx="8" fill="#fff"/><rect x="1660" y="492" width="35" height="35.5" rx="4" fill="#fff"/><rect x="1720.5" y="492" width="150.5" height="35.5" rx="8" fill="#fff"/><rect x="1463" y="549" width="408" height="594" rx="9" fill="#fff"/><circle cx="1482" cy="501.5" r="4.8" fill="#177ce1"/><path d="M1472 519 Q1472 508 1482 508 Q1488 508 1490 511 L1486 519 Z" fill="#177ce1"/><path d="M1491 510.5 V523 M1485 516.5 H1497.5" stroke="#177ce1" stroke-width="3.2" stroke-linecap="round"/><path d="M1670 518 L1686 502" stroke="#177ce1" stroke-width="4" stroke-linecap="round"/><path d="M1669 504 l1.2 -2.5 l1.2 2.5 l2.5 1.2 l-2.5 1.2 l-1.2 2.5 l-1.2 -2.5 l-2.5 -1.2 Z" fill="#177ce1"/><path d="M1684 514 l1.2 -2.5 l1.2 2.5 l2.5 1.2 l-2.5 1.2 l-1.2 2.5 l-1.2 -2.5 l-2.5 -1.2 Z" fill="#177ce1"/><path d="M1675 499 l0.8 -1.7 l0.8 1.7 l1.7 0.8 l-1.7 0.8 l-0.8 1.7 l-0.8 -1.7 l-1.7 -0.8 Z" fill="#177ce1"/><rect x="1743" y="499" width="8" height="15" rx="4" fill="#177ce1"/><path d="M1739 509 Q1739 518 1747 518 Q1755 518 1755 509" fill="none" stroke="#177ce1" stroke-width="1.8"/><path d="M1747 518 V522 M1742.5 522.5 H1751.5" stroke="#177ce1" stroke-width="1.8"/><circle cx="1504.5" cy="570" r="6.5" fill="none" stroke="#555" stroke-width="1.8"/><path d="M1509 575 L1513.5 579.5" stroke="#555" stroke-width="2" stroke-linecap="round"/><rect x="1486" y="586" width="367" height="2" fill="#757575"/><path d="M1849 613.5 L1855 605 L1861 613.5 Z" fill="#111"/><path d="M1849 1112 L1855 1120.5 L1861 1112 Z" fill="#111"/><rect x="1850" y="628" width="10" height="465" rx="5" fill="#177ce1"/><rect x="1490.5" y="641" width="8" height="11" rx="1.2" fill="#222"/><rect x="1491" y="638.5" width="7" height="1.6" fill="#222"/><rect x="1492" y="643" width="5" height="1" fill="#fff"/><rect x="1490.5" y="670.3" width="8" height="11" rx="1.2" fill="#222"/><rect x="1491" y="667.8" width="7" height="1.6" fill="#222"/><rect x="1492" y="672.3" width="5" height="1" fill="#fff"/><rect x="1490.5" y="702" width="8" height="11" rx="1.2" fill="#222"/><rect x="1491" y="699.5" width="7" height="1.6" fill="#222"/><rect x="1492" y="704" width="5" height="1" fill="#fff"/><rect x="1490.5" y="734" width="8" height="11" rx="1.2" fill="#222"/><rect x="1491" y="731.5" width="7" height="1.6" fill="#222"/><rect x="1492" y="736" width="5" height="1" fill="#fff"/><rect x="1490.5" y="766" width="8" height="11" rx="1.2" fill="#222"/><rect x="1491" y="763.5" width="7" height="1.6" fill="#222"/><rect x="1492" y="768" width="5" height="1" fill="#fff"/><rect x="1490.5" y="798" width="8" height="11" rx="1.2" fill="#222"/><rect x="1491" y="795.5" width="7" height="1.6" fill="#222"/><rect x="1492" y="800" width="5" height="1" fill="#fff"/><path d="M1490 861 H1500 L1503 864 V868 L1499 872 V876 H1490 Z" fill="#222"/><path d="M1492 865 H1499 M1492 868 H1498 M1492 871 H1496" stroke="#fff" stroke-width="1.1"/><path d="M1500 875 L1506 867" stroke="#222" stroke-width="2.4" stroke-linecap="round"/><path d="M1490 899.7 H1500 L1503 902.7 V906.7 L1499 910.7 V914.7 H1490 Z" fill="#222"/><path d="M1492 903.7 H1499 M1492 906.7 H1498 M1492 909.7 H1496" stroke="#fff" stroke-width="1.1"/><path d="M1500 913.7 L1506 905.7" stroke="#222" stroke-width="2.4" stroke-linecap="round"/><path d="M1490 937.5 H1500 L1503 940.5 V944.5 L1499 948.5 V952.5 H1490 Z" fill="#222"/><path d="M1492 941.5 H1499 M1492 944.5 H1498 M1492 947.5 H1496" stroke="#fff" stroke-width="1.1"/><path d="M1500 951.5 L1506 943.5" stroke="#222" stroke-width="2.4" stroke-linecap="round"/><path d="M1490 975.7 H1500 L1503 978.7 V982.7 L1499 986.7 V990.7 H1490 Z" fill="#222"/><path d="M1492 979.7 H1499 M1492 982.7 H1498 M1492 985.7 H1496" stroke="#fff" stroke-width="1.1"/><path d="M1500 989.7 L1506 981.7" stroke="#222" stroke-width="2.4" stroke-linecap="round"/><path d="M1490 1014 H1500 L1503 1017 V1021 L1499 1025 V1029 H1490 Z" fill="#222"/><path d="M1492 1018 H1499 M1492 1021 H1498 M1492 1024 H1496" stroke="#fff" stroke-width="1.1"/><path d="M1500 1028 L1506 1020" stroke="#222" stroke-width="2.4" stroke-linecap="round"/><path d="M1490 1053 H1500 L1503 1056 V1060 L1499 1064 V1068 H1490 Z" fill="#222"/><path d="M1492 1057 H1499 M1492 1060 H1498 M1492 1063 H1496" stroke="#fff" stroke-width="1.1"/><path d="M1500 1067 L1506 1059" stroke="#222" stroke-width="2.4" stroke-linecap="round"/><path d="M1490 1091.7 H1500 L1503 1094.7 V1098.7 L1499 1102.7 V1106.7 H1490 Z" fill="#222"/><path d="M1492 1095.7 H1499 M1492 1098.7 H1498 M1492 1101.7 H1496" stroke="#fff" stroke-width="1.1"/><path d="M1500 1105.7 L1506 1097.7" stroke="#222" stroke-width="2.4" stroke-linecap="round"/></svg>
<div class="t" style="left:1686.00px;top:457.05px;font-size:17px;color:#111;font-weight:bold;transform:scaleX(0.9358);">5 Free Trial</div>
<div class="t" style="left:1510.00px;top:509.05px;font-size:17px;color:#8a8a8a;transform:scaleX(1.0386);">Patient Name</div>
<div class="t" style="left:1785.00px;top:510.05px;font-size:17px;color:#111;font-weight:bold;transform:scaleX(0.9527);">Resume</div>
<div class="t" style="left:1531.00px;top:570.23px;font-size:16.5px;color:#9a9a9a;transform:scaleX(1.0841);">Search for a template</div>
<div class="t" style="left:1488.00px;top:612.58px;font-size:17.5px;color:#333;transform:scaleX(1.1665);">Use a note template</div>
<div class="t" style="left:1507.50px;top:645.88px;font-size:17.5px;color:#222;transform:scaleX(1.1356);">General Practitioner’s note</div>
<div class="t" style="left:1507.50px;top:675.17px;font-size:17.5px;color:#222;transform:scaleX(0.9918);">H &amp; P</div>
<div class="t" style="left:1507.50px;top:706.88px;font-size:17.5px;color:#222;transform:scaleX(1.0904);">H &amp; P (Issues)</div>
<div class="t" style="left:1507.50px;top:738.88px;font-size:17.5px;color:#222;transform:scaleX(0.9599);">SOAP</div>
<div class="t" style="left:1507.50px;top:770.88px;font-size:17.5px;color:#222;transform:scaleX(1.0744);">SOAP (Issues)</div>
<div class="t" style="left:1507.50px;top:802.88px;font-size:17.5px;color:#222;transform:scaleX(1.0642);">Issues List</div>
<div class="t" style="left:1488.00px;top:834.88px;font-size:17.5px;color:#444;transform:scaleX(1.0902);">EHR templates</div>
<div class="t" style="left:1517.00px;top:868.65px;font-size:21px;color:#111;transform:scaleX(1.1302);">point click care</div>
<div class="t" style="left:1517.00px;top:907.35px;font-size:21px;color:#111;transform:scaleX(1.1260);">healthcare ehr systems</div>
<div class="t" style="left:1517.00px;top:945.15px;font-size:21px;color:#111;transform:scaleX(1.1524);">patient care coordination</div>
<div class="t" style="left:1517.00px;top:983.35px;font-size:21px;color:#111;transform:scaleX(1.1447);">patient record</div>
<div class="t" style="left:1517.00px;top:1021.65px;font-size:21px;color:#111;transform:scaleX(1.1179);">pcc ehr</div>
<div class="t" style="left:1517.00px;top:1060.65px;font-size:21px;color:#111;transform:scaleX(1.1470);">ehr platform</div>
<div class="t" style="left:1517.00px;top:1099.35px;font-size:21px;color:#111;transform:scaleX(1.1151);">ehr systems for hospitals</div>
<div style="position:absolute;left:785px;top:836px;width:456px;height:74px;background:rgba(228,229,233,0.8)"></div>
<svg style="position:absolute;left:785px;top:836px" width="456" height="74" viewBox="785 836 456 74"><g opacity="0.92"><circle cx="842" cy="874" r="32.5" fill="#ee6a58"/><rect x="836.5" y="855" width="11" height="22" rx="5.5" fill="none" stroke="#fff" stroke-width="3.2"/><path d="M828.5 873 Q828.5 888 842 888 Q855.5 888 855.5 873" fill="none" stroke="#fff" stroke-width="3.4"/><rect x="838" y="887" width="8.5" height="6" fill="#fff"/></g><rect x="897.5" y="865" width="6" height="21" fill="#6e6e6e" opacity="0.85"/><rect x="912.5" y="865" width="6" height="21" fill="#6e6e6e" opacity="0.85"/><rect x="927.5" y="865" width="6" height="21" fill="#6e6e6e" opacity="0.85"/><rect x="942.5" y="865" width="6" height="21" fill="#6e6e6e" opacity="0.85"/><rect x="957.5" y="865" width="6" height="21" fill="#6e6e6e" opacity="0.85"/><rect x="972.5" y="865" width="6" height="21" fill="#6e6e6e" opacity="0.85"/><rect x="987.5" y="865" width="6" height="21" fill="#6e6e6e" opacity="0.85"/><rect x="1002.5" y="865" width="6" height="21" fill="#6e6e6e" opacity="0.85"/><rect x="1017.5" y="865" width="6" height="21" fill="#6e6e6e" opacity="0.85"/><rect x="1032.5" y="865" width="6" height="21" fill="#6e6e6e" opacity="0.85"/><rect x="1047.5" y="865" width="6" height="21" fill="#6e6e6e" opacity="0.85"/><rect x="1062.5" y="865" width="6" height="21" fill="#6e6e6e" opacity="0.85"/><rect x="1077.5" y="865" width="6" height="21" fill="#6e6e6e" opacity="0.85"/><rect x="1092.5" y="865" width="6" height="21" fill="#6e6e6e" opacity="0.85"/><rect x="1107.5" y="865" width="6" height="21" fill="#6e6e6e" opacity="0.85"/><rect x="1122.5" y="865" width="6" height="21" fill="#6e6e6e" opacity="0.85"/><rect x="1137.5" y="865" width="6" height="21" fill="#6e6e6e" opacity="0.85"/><rect x="1152.5" y="865" width="6" height="21" fill="#6e6e6e" opacity="0.85"/><path d="M1175 857 H1203 V877 H1186 L1180 883 V877 H1175 Z" fill="none" stroke="#c3cad2" stroke-width="1.2"/><path d="M1180 864 H1193 M1180 867 H1193 M1180 870 H1190" stroke="#c3cad2" stroke-width="1"/><path d="M1193 865 H1223 M1193 874 H1223 M1193 883 H1223" stroke="#7d7d7d" stroke-width="3"/></svg>
</body></html>
